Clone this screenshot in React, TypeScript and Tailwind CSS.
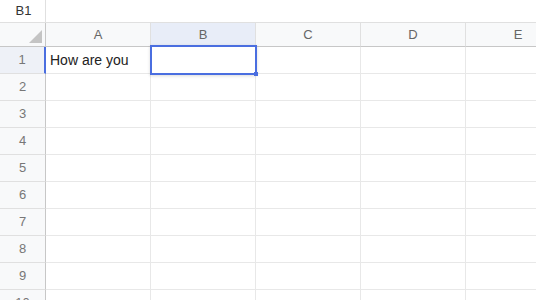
import React from "react";

const cols = ["A", "B", "C", "D", "E"];
const rows = [1, 2, 3, 4, 5, 6, 7, 8, 9, 10];

export default function App() {
  return (
    <div
      className="h-[300px] w-[536px] overflow-hidden bg-white text-[#333]"
      style={{ fontFamily: "'Liberation Sans', Arial, sans-serif" }}
    >
      {/* name box bar */}
      <div className="flex h-[23px] border-b border-[#e0e0e0]">
        <div className="flex w-[46px] shrink-0 items-center justify-center border-r border-[#e0e0e0] pl-[2px] text-[13px] text-[#333]">
          B1
        </div>
        <div className="flex-1" />
      </div>

      <div className="relative">
        {/* header row */}
        <div className="flex h-[24px]">
          <div className="flex w-[46px] shrink-0 items-end justify-end border-r border-b border-[#c7c7c7] bg-[#f8f9fa] p-[3px]">
            <svg width="13" height="13" viewBox="0 0 13 13">
              <polygon points="13,0 13,13 0,13" fill="#c4c4c4" />
            </svg>
          </div>
          {cols.map((c) => (
            <div
              key={c}
              className={
                c === "B"
                  ? "flex w-[105px] shrink-0 items-center justify-center border-r border-b border-r-[#e0e0e0] border-b-[#c7c7c7] bg-[#e8edf8] text-[13px] text-[#666]"
                  : "flex w-[105px] shrink-0 items-center justify-center border-r border-b border-r-[#e0e0e0] border-b-[#c7c7c7] bg-[#f8f9fa] text-[13px] text-[#666]"
              }
            >
              {c}
            </div>
          ))}
        </div>

        {rows.map((r) => (
          <div key={r} className="flex h-[27px]">
            <div
              className={
                r === 1
                  ? "flex w-[46px] shrink-0 items-center justify-center border-r-2 border-b border-r-[#4a6ee0] border-b-[#e0e0e0] bg-[#eef1f7] text-[13px] text-[#777]"
                  : "flex w-[46px] shrink-0 items-center justify-center border-r border-b border-r-[#c7c7c7] border-b-[#e0e0e0] bg-[#f8f9fa] text-[13px] text-[#777]"
              }
            >
              {r}
            </div>
            {cols.map((c) => (
              <div
                key={c}
                className="flex w-[105px] shrink-0 items-center border-r border-b border-[#e8e8e8] px-[4px] text-[14px] text-[#222]"
              >
                {r === 1 && c === "A" ? "How are you" : ""}
              </div>
            ))}
          </div>
        ))}

        {/* selection on B1 */}
        <div className="absolute top-[22px] left-[150px] h-[30px] w-[107px] border-[2.5px] border-[#4a6ee0] shadow-[0_1px_3px_rgba(0,0,0,0.15)]">
          <div className="absolute -right-[3px] -bottom-[3px] h-[4px] w-[4px] bg-[#4a6ee0]" />
        </div>
      </div>
    </div>
  );
}
